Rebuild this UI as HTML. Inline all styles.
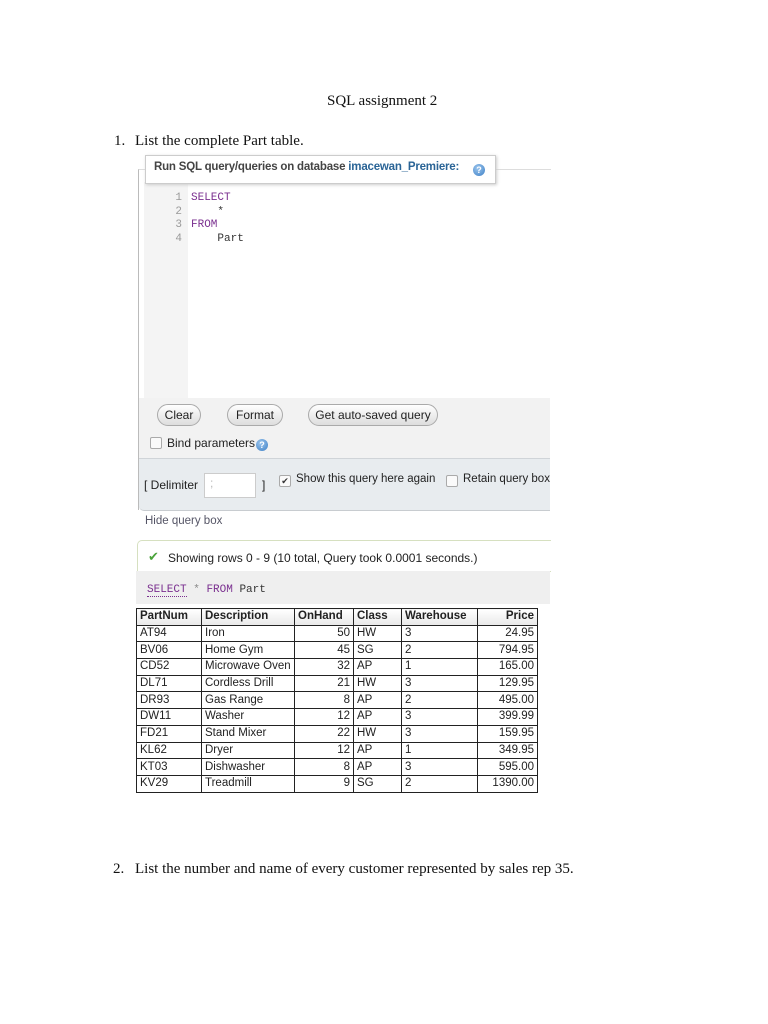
<!DOCTYPE html>
<html><head><meta charset="utf-8"><style>
body{margin:0;width:768px;height:1024px;background:#fff;position:relative;overflow:hidden}
.a{position:absolute;white-space:nowrap}
.serif{font-family:"Liberation Serif",serif;font-size:15px;color:#111}
.sans{font-family:"Liberation Sans",sans-serif;font-size:12px;color:#222}
.mono{font-family:"Liberation Mono",monospace;font-size:11px}
.btn{position:absolute;top:404px;height:20px;border:1px solid #aaa;border-radius:11px;background:linear-gradient(#fff,#ddd);font-family:"Liberation Sans",sans-serif;font-size:12px;line-height:20px;text-align:center;color:#222}
.cb{position:absolute;width:10px;height:10px;border:1px solid #aaa;border-radius:2px;background:#fafafa}
.q{position:absolute;width:12px;height:12px;border-radius:50%;background:radial-gradient(circle at 40% 35%,#9cc6ee,#3d7fc5);color:#fff;font:bold 9px "Liberation Sans";text-align:center;line-height:12px}
table{border-collapse:collapse;font-family:"Liberation Sans",sans-serif;font-size:11.5px;color:#222;table-layout:fixed}
td{border:1px solid #222;height:15.7px;padding:0 3px;line-height:15px;white-space:nowrap;overflow:hidden}
.r{text-align:right}
tr:first-child td{font-weight:bold;background:linear-gradient(#fff,#e8e8e8)}
</style></head><body>
<div class="a serif" style="left:327px;top:93px">SQL assignment 2</div>
<div class="a serif" style="left:114px;top:133px">1.</div>
<div class="a serif" style="left:135px;top:133px">List the complete Part table.</div>

<div class="a" style="left:138px;top:169px;width:412px;height:340px;border-left:1px solid #bbb;border-top:1px solid #ddd"></div>
<div class="a" style="left:144px;top:182px;width:44px;height:216px;background:#f4f4f4"></div>
<div class="a" style="left:188px;top:182px;width:362px;height:216px;background:#fff"></div>
<div class="a" style="left:139px;top:398px;width:411px;height:60px;background:#f2f2f2"></div>
<div class="a" style="left:139px;top:458px;width:411px;height:51px;background:#e8ecef;border-top:1px solid #d0d4d8;border-bottom:1px solid #c8ccd0;border-radius:0 0 0 5px"></div>
<div class="a" style="left:145px;top:155px;width:349px;height:27px;background:#fff;border:1px solid #ccc;box-shadow:1px 1px 3px #ccc"></div>
<div class="a sans" style="left:154px;top:161px;font-size:11.5px;font-weight:bold;color:#444;letter-spacing:-0.2px">Run SQL query/queries on database <span style="color:#2a6496">imacewan_Premiere:</span></div>
<div class="q" style="left:473px;top:164px">?</div>

<div class="a mono" style="left:168px;top:192px;color:#999;line-height:13.5px;text-align:right;width:14px">1<br>2<br>3<br>4</div>
<div class="a mono" style="left:191px;top:192px;line-height:13.5px;color:#333;white-space:pre"><span style="color:#7a2f8f">SELECT</span>
    *
<span style="color:#7a2f8f">FROM</span>
    Part</div>

<div class="btn" style="left:157px;width:42px">Clear</div>
<div class="btn" style="left:227px;width:54px">Format</div>
<div class="btn" style="left:308px;width:128px">Get auto-saved query</div>
<div class="cb" style="left:150px;top:437px"></div>
<div class="a sans" style="left:167px;top:436px">Bind parameters</div>
<div class="q" style="left:256px;top:439px">?</div>

<div class="a sans" style="left:144px;top:478px">[ Delimiter</div>
<div class="a" style="left:204px;top:473px;width:50px;height:23px;background:#fff;border:1px solid #ccc"><span class="sans" style="color:#bbb;margin-left:5px">;</span></div>
<div class="a sans" style="left:262px;top:478px">]</div>
<div class="cb" style="left:279px;top:475px;font-size:9px;line-height:10px;text-align:center;color:#333">✔</div>
<div class="a sans" style="left:296px;top:473px;font-size:11.5px">Show this query here again</div>
<div class="cb" style="left:446px;top:475px"></div>
<div class="a sans" style="left:463px;top:473px;font-size:11.5px">Retain query box</div>

<div class="a sans" style="left:145px;top:515px;color:#556;font-size:11.5px">Hide query box</div>

<div class="a" style="left:137px;top:540px;width:413px;height:30px;border:1px solid #d6e0c0;border-right:none;border-radius:5px 0 0 0;background:#fff"></div>
<div class="a" style="left:148px;top:550px;color:#4aa33a;font-size:13px;font-family:'DejaVu Sans'">✔</div>
<div class="a sans" style="left:168px;top:551px">Showing rows 0 - 9 (10 total, Query took 0.0001 seconds.)</div>
<div class="a" style="left:136px;top:571px;width:414px;height:33px;background:#efefef"></div>
<div class="a mono" style="left:147px;top:584px;color:#333;font-size:11px"><span style="color:#7a2f8f;border-bottom:1px dotted #7a2f8f">SELECT</span> <span style="color:#888">*</span> <span style="color:#7a2f8f">FROM</span> Part</div>

<table class="a" style="left:136px;top:608px;width:401px">
<colgroup><col style="width:65px"><col style="width:93px"><col style="width:59px"><col style="width:48px"><col style="width:76px"><col style="width:60px"></colgroup>
<tr><td>PartNum</td><td>Description</td><td>OnHand</td><td>Class</td><td>Warehouse</td><td class="r">Price</td></tr>
<tr><td>AT94</td><td>Iron</td><td class="r">50</td><td>HW</td><td>3</td><td class="r">24.95</td></tr>
<tr><td>BV06</td><td>Home Gym</td><td class="r">45</td><td>SG</td><td>2</td><td class="r">794.95</td></tr>
<tr><td>CD52</td><td>Microwave Oven</td><td class="r">32</td><td>AP</td><td>1</td><td class="r">165.00</td></tr>
<tr><td>DL71</td><td>Cordless Drill</td><td class="r">21</td><td>HW</td><td>3</td><td class="r">129.95</td></tr>
<tr><td>DR93</td><td>Gas Range</td><td class="r">8</td><td>AP</td><td>2</td><td class="r">495.00</td></tr>
<tr><td>DW11</td><td>Washer</td><td class="r">12</td><td>AP</td><td>3</td><td class="r">399.99</td></tr>
<tr><td>FD21</td><td>Stand Mixer</td><td class="r">22</td><td>HW</td><td>3</td><td class="r">159.95</td></tr>
<tr><td>KL62</td><td>Dryer</td><td class="r">12</td><td>AP</td><td>1</td><td class="r">349.95</td></tr>
<tr><td>KT03</td><td>Dishwasher</td><td class="r">8</td><td>AP</td><td>3</td><td class="r">595.00</td></tr>
<tr><td>KV29</td><td>Treadmill</td><td class="r">9</td><td>SG</td><td>2</td><td class="r">1390.00</td></tr>
</table>

<div class="a serif" style="left:113px;top:861px">2.</div>
<div class="a serif" style="left:135px;top:861px">List the number and name of every customer represented by sales rep 35.</div>
</body></html>
